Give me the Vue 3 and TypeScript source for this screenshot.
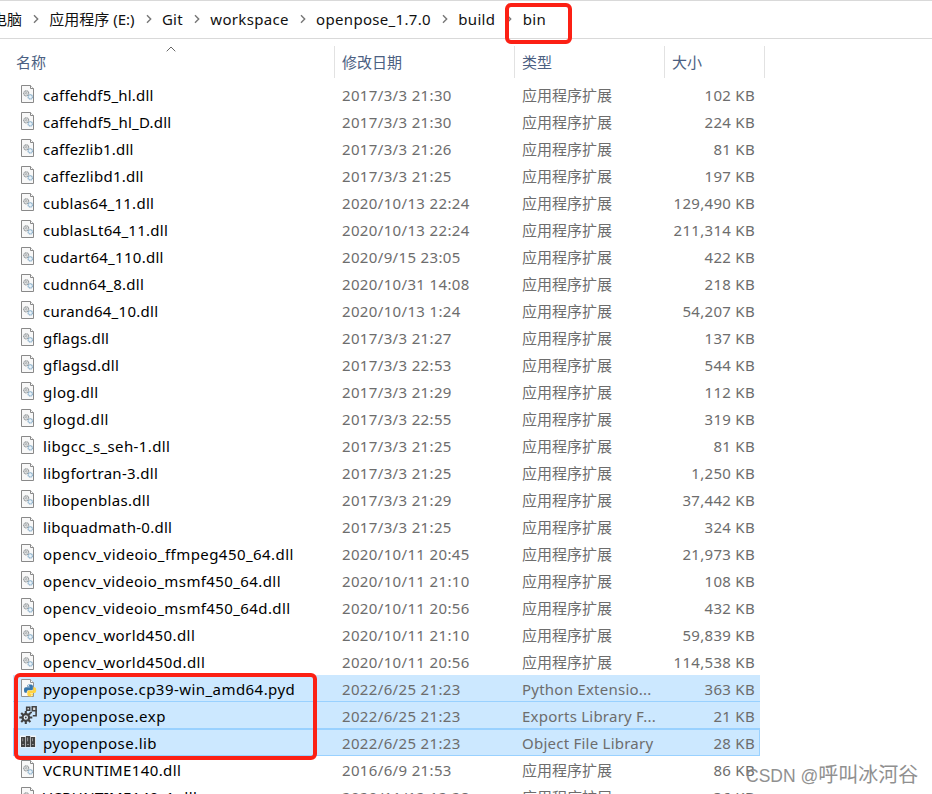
<script setup lang="ts">
interface FileRow { name: string; date: string; type: string; size: string; icon: string; tracking: number }
const EXT = '应用程序扩展'
const dll = (name: string, date: string, size: string, tracking: number): FileRow => ({ name, date, type: EXT, size: size + ' KB', icon: 'dll', tracking })
const crumbs: string[] = ['电脑', '应用程序 (E:)', 'Git', 'workspace', 'openpose_1.7.0', 'build', 'bin']
const files: FileRow[] = [
  dll('caffehdf5_hl.dll', '2017/3/3 21:30', '102', 0.2),
  dll('caffehdf5_hl_D.dll', '2017/3/3 21:30', '224', 0.22),
  dll('caffezlib1.dll', '2017/3/3 21:26', '81', 0.2),
  dll('caffezlibd1.dll', '2017/3/3 21:25', '197', 0.24),
  dll('cublas64_11.dll', '2020/10/13 22:24', '129,490', 0.27),
  dll('cublasLt64_11.dll', '2020/10/13 22:24', '211,314', 0.28),
  dll('cudart64_110.dll', '2020/9/15 23:05', '422', 0.28),
  dll('cudnn64_8.dll', '2020/10/31 14:08', '218', 0.27),
  dll('curand64_10.dll', '2020/10/13 1:24', '54,207', 0.27),
  dll('gflags.dll', '2017/3/3 21:27', '137', 0.2),
  dll('gflagsd.dll', '2017/3/3 22:53', '544', 0.25),
  dll('glog.dll', '2017/3/3 21:29', '112', 0.4),
  dll('glogd.dll', '2017/3/3 22:55', '319', 0.48),
  dll('libgcc_s_seh-1.dll', '2017/3/3 21:25', '81', 0.38),
  dll('libgfortran-3.dll', '2017/3/3 21:25', '1,250', 0.3),
  dll('libopenblas.dll', '2017/3/3 21:29', '37,442', 0.3),
  dll('libquadmath-0.dll', '2017/3/3 21:25', '324', 0.27),
  dll('opencv_videoio_ffmpeg450_64.dll', '2020/10/11 20:45', '21,973', 0.44),
  dll('opencv_videoio_msmf450_64.dll', '2020/10/11 21:10', '108', 0.4),
  dll('opencv_videoio_msmf450_64d.dll', '2020/10/11 20:56', '432', 0.4),
  dll('opencv_world450.dll', '2020/10/11 21:10', '59,839', 0.41),
  dll('opencv_world450d.dll', '2020/10/11 20:56', '114,538', 0.43),
  { name: 'pyopenpose.cp39-win_amd64.pyd', date: '2022/6/25 21:23', type: 'Python Extensio...', size: '363 KB', icon: 'py', tracking: 0.45 },
  { name: 'pyopenpose.exp', date: '2022/6/25 21:23', type: 'Exports Library F...', size: '21 KB', icon: 'exp', tracking: 0.5 },
  { name: 'pyopenpose.lib', date: '2022/6/25 21:23', type: 'Object File Library', size: '28 KB', icon: 'lib', tracking: 0.46 },
  dll('VCRUNTIME140.dll', '2016/6/9 21:53', '86', 0.38),
  dll('VCRUNTIME140_1.dll', '2020/11/12 12:28', '36', 0.38),
]
</script>

<template>
  <div class="window">
    <nav class="path">
      <template v-for="(c, i) in crumbs" :key="c">
        <svg v-if="i" class="chev" viewBox="0 0 6 10"><path d="M1 1.2 4.7 5 1 8.8" /></svg>
        <span class="crumb" :class="{ latin: i > 1 }">{{ c }}</span>
      </template>
    </nav>
    <header class="heads">
      <div class="head">名称<svg class="sort" viewBox="0 0 10 6"><path d="M.7 5.3 5 1 9.3 5.3" /></svg></div>
      <div class="head">修改日期</div>
      <div class="head">类型</div>
      <div class="head">大小</div>
    </header>
    <main class="list">
      <div v-for="f in files" :key="f.name" class="row" :class="{ selected: f.icon !== 'dll', focused: f.icon === 'lib' }">
        <div class="icon">
          <svg v-if="f.icon === 'dll'" width="18" height="20" viewBox="0 0 18 20">
            <path d="M2.500 1.500h9l3 3v14h-12z" fill="#f8f8f8" stroke="#898989" />
            <path d="M11.500 1.500v3h3" fill="#fff" stroke="#898989" />
            <circle cx="7.200" cy="9.300" r="2.500" fill="#eceeef" stroke="#929698" stroke-width="1.200" stroke-dasharray="1.300 .4" />
            <circle cx="7.200" cy="9.300" r=".8" fill="none" stroke="#929698" stroke-width=".7" />
            <circle cx="11.300" cy="12.900" r="2.200" fill="#e0edf6" stroke="#8db0c9" stroke-width="1.200" stroke-dasharray="1.300 .4" />
            <circle cx="11.300" cy="12.900" r=".6" fill="#f8f8f8" />
          </svg>
          <svg v-else-if="f.icon === 'py'" width="18" height="20" viewBox="0 0 18 20">
            <path d="M2.500 1.500h9l3 3v14h-12z" fill="#f8f8f8" stroke="#929292" />
            <path d="M11.500 1.500v3h3" fill="#fff" stroke="#929292" />
            <g transform="translate(.3 .8)">
              <path d="M8 7.200c0-1.200 1-1.600 2.800-1.600s2.800.5 2.800 1.700v2.800q0 1.300-1.400 1.300H9q-1.500 0-1.500 1.500v1.100H6.400c-1.100 0-1.700-1-1.700-2.900S5.300 8.500 6.700 8.500h4V8H8z" fill="#3876aa" />
              <path d="M14 8.500h1.100c1.200 0 1.800 1.100 1.800 3s-.7 2.800-1.900 2.800h-4v.5h2.800v1.100c0 1.300-1 1.800-2.900 1.800S8 17 8 15.700v-2.500q0-1.400 1.400-1.400h3.100Q14 11.800 14 10.400z" fill="#ffd443" />
              <circle cx="9.300" cy="6.900" r=".6" fill="#fff" /><circle cx="12.500" cy="16.400" r=".6" fill="#fff" />
            </g>
          </svg>
          <svg v-else-if="f.icon === 'exp'" width="20" height="20" viewBox="0 0 20 20">
            <path d="M6.800 6v13M.3 12.500h13M2.200 7.900l9.200 9.200M11.400 7.900l-9.200 9.200" stroke="#424242" stroke-width="2.100" />
            <circle cx="6.800" cy="12.500" r="3.300" fill="#e5f1fa" stroke="#424242" stroke-width="2.200" />
            <circle cx="6.800" cy="12.500" r=".9" fill="#424242" />
            <path d="M7.700 2.300h3v3h-3zM13.300 1.700h3.800v4h-3.800z" fill="#ddd" stroke="#424242" stroke-width="1.600" />
            <path d="M17.100 5v5.700h-3.300M11 7.500h2" fill="none" stroke="#424242" stroke-width="1.600" />
          </svg>
          <svg v-else width="18" height="20" viewBox="0 0 18 20">
            <path d="M1 3.500h16v12H1z" fill="#f3f7fa" />
            <path d="M2 5h4.300v10H2zM6.900 4h4.300v11H6.900zM11.800 5h4.300v10h-4.300z" fill="#424242" />
            <path d="M3.700 6.300v3M8.600 5.500v3.800M13.500 6.300v3" stroke="#aaa" stroke-width=".8" />
            <path d="M3.500 12h1.200v1H3.500zM8.400 12h1.200v1H8.400zM13.300 12h1.200v1h-1.200z" fill="#bbb" />
          </svg>
        </div>
        <div class="name" :style="{ letterSpacing: f.tracking + 'px' }">{{ f.name }}</div>
        <div class="date">{{ f.date }}</div>
        <div class="type" :class="{ latin: f.icon !== 'dll' }">{{ f.type }}</div>
        <div class="size">{{ f.size }}</div>
      </div>
    </main>
    <div class="mark mark-bin"></div>
    <div class="mark mark-files"></div>
    <div class="credit">CSDN @<span class="author">呼叫冰河谷</span></div>
  </div>
</template>

<style>
body { margin: 0; overflow: hidden; background: #fff; }
</style>
<style scoped>
.window { position: relative; width: 932px; height: 794px; overflow: hidden; background: #fff; font: 15px/27px "Noto Sans", "Noto Sans CJK SC", sans-serif; color: #000; white-space: nowrap; }
.path { box-sizing: border-box; height: 39px; display: flex; align-items: center; border-top: 1px solid #d9d9d9; border-bottom: 1px solid #d9d9d9; margin-left: -8px; }
.crumb { color: #111; }
.crumb.latin { letter-spacing: .32px; }
.chev { width: 6px; height: 10px; flex: none; margin: 0 10.300px 2px 11px; fill: none; stroke: #777; stroke-width: 1.4; }
.heads { display: grid; grid-template-columns: 335px 180px 150px 100px; height: 42px; align-items: start; }
.head { position: relative; box-sizing: border-box; margin-top: 7px; height: 32px; padding: 4px 0 0 7px; border-right: 1px solid #e2e2e2; color: #4b6082; line-height: 25px; }
.head:first-child { padding-left: 16px; }
.sort { position: absolute; width: 10px; height: 6px; left: 166px; top: 0; fill: none; stroke: #666; stroke-width: 1; }
.row { box-sizing: border-box; display: grid; grid-template-columns: 29px 300px 180px 1fr 84px; width: 747px; height: 27px; margin-left: 13px; padding-right: 5px; color: #6d6d6d; line-height: 29px; }
.icon { padding: 3px 0 0 6px; height: 24px; }
.icon svg { display: block; overflow: visible; }
.name { padding-left: 1px; color: #000; }
.size { text-align: right; letter-spacing: .3px; }
.selected { background: #cce8ff; box-shadow: inset 0 -1px #99d1ff; }
.focused { box-shadow: inset 0 0 0 1px #99d1ff; }
.date { letter-spacing: .35px; }
.type.latin { letter-spacing: .24px; }
.mark { position: absolute; box-sizing: border-box; border: 4px solid #fc2014; border-radius: 6px; }
.mark-bin { left: 505px; top: 3px; width: 67px; height: 41px; }
.mark-files { left: 14px; top: 673px; width: 303px; height: 87px; }
.credit { position: absolute; left: 746px; top: 763px; font: 17.500px/24px "Liberation Sans", "Noto Sans CJK SC", sans-serif; color: #858585; opacity: .9; }
.author { font-size: 20px; }
</style>
